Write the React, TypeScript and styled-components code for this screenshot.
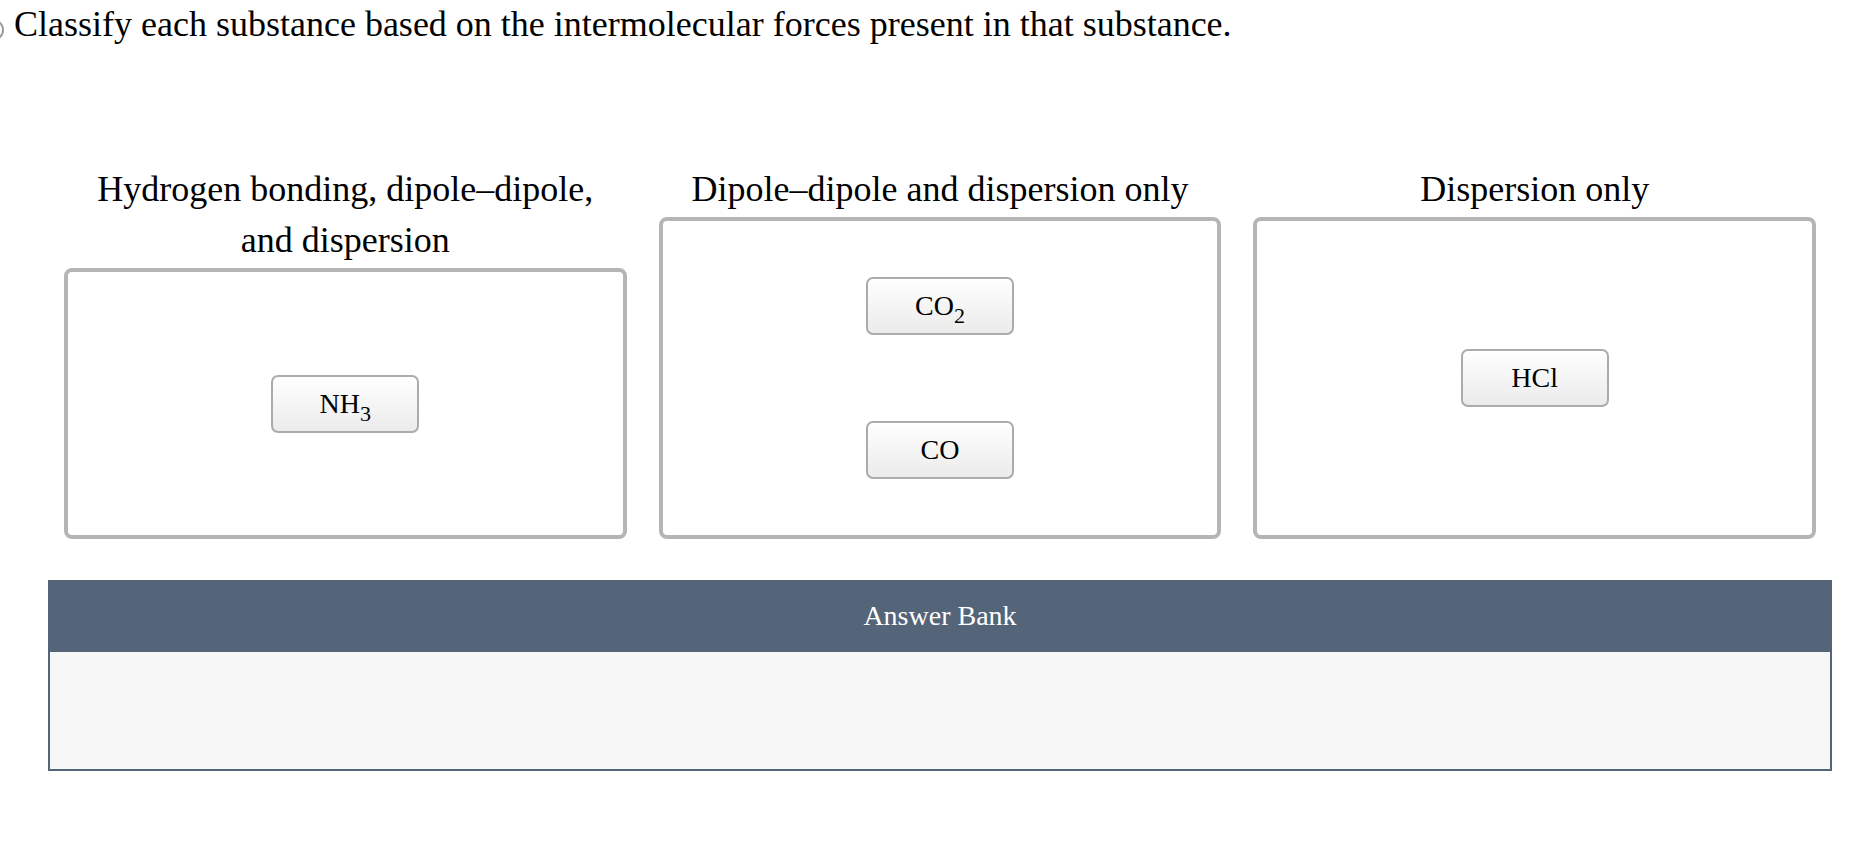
import React from "react";
import styled, { createGlobalStyle } from "styled-components";

const Global = createGlobalStyle`
  html, body { margin: 0; padding: 0; background: #ffffff; }
  body { font-family: "Liberation Serif", "Times New Roman", serif; color: #000; }
`;

const Page = styled.div`
  width: 1868px;
  min-height: 844px;
  display: flex;
  flex-direction: column;
`;

const HeadingRow = styled.div`
  display: flex;
  align-items: center;
  padding: 4px 0 0 0;
`;

const Badge = styled.span`
  width: 22px;
  height: 22px;
  box-sizing: border-box;
  border: 2px solid #9a9a9a;
  border-radius: 50%;
  margin-left: -18px;
  margin-right: 10px;
  margin-top: 12px;
  flex: none;
`;

const Heading = styled.h1`
  margin: 0;
  font-weight: normal;
  font-size: 36px;
  line-height: 40px;
`;

const Columns = styled.div`
  margin: 119px 0 0 64px;
  width: 1752px;
  display: grid;
  grid-template-columns: repeat(3, 1fr);
  column-gap: 32px;
`;

const Column = styled.div`
  display: flex;
  flex-direction: column;
`;

const Title = styled.div`
  font-size: 36px;
  line-height: 51px;
  text-align: center;
  padding-top: 1px;
  margin-bottom: 2px;
`;

const DropZone = styled.div`
  flex: 1;
  min-height: 271px;
  box-sizing: border-box;
  border: 4px solid #b5b5b5;
  border-radius: 8px;
  display: flex;
  flex-direction: column;
  align-items: center;
  justify-content: center;
  gap: 86px;
`;

const Chip = styled.div`
  width: 148px;
  height: 58px;
  box-sizing: border-box;
  border: 2px solid #ababab;
  border-radius: 7px;
  background: linear-gradient(#ffffff, #ebebeb);
  display: flex;
  align-items: center;
  justify-content: center;
  font-size: 28px;
  line-height: 1;
`;

const Formula = styled.span`
  display: inline-block;
  line-height: 1;
`;

const Sub = styled.sub`
  font-size: 22px;
  line-height: 0;
  vertical-align: -8px;
`;

const Bank = styled.section`
  margin: 41px 0 0 48px;
  width: 1784px;
  display: flex;
  flex-direction: column;
`;

const BankHeader = styled.div`
  height: 72px;
  background: #546479;
  color: #ffffff;
  font-size: 28px;
  display: flex;
  align-items: center;
  justify-content: center;
`;

const BankBody = styled.div`
  height: 119px;
  box-sizing: border-box;
  background: #f7f7f7;
  border: 2px solid #546479;
  border-top: none;
`;

type Item = { base: string; sub?: string };

const columns: { title: React.ReactNode; items: Item[] }[] = [
  {
    title: (
      <>
        Hydrogen bonding, dipole–dipole,
        <br />
        and dispersion
      </>
    ),
    items: [{ base: "NH", sub: "3" }],
  },
  {
    title: "Dipole–dipole and dispersion only",
    items: [{ base: "CO", sub: "2" }, { base: "CO" }],
  },
  { title: "Dispersion only", items: [{ base: "HCl" }] },
];

export default function App() {
  return (
    <Page>
      <Global />
      <HeadingRow>
        <Badge />
        <Heading>
          Classify each substance based on the intermolecular forces present in that substance.
        </Heading>
      </HeadingRow>
      <Columns>
        {columns.map((c, i) => (
          <Column key={i}>
            <Title>{c.title}</Title>
            <DropZone>
              {c.items.map((it, j) => (
                <Chip key={j}>
                  <Formula>
                    {it.base}
                    {it.sub && <Sub>{it.sub}</Sub>}
                  </Formula>
                </Chip>
              ))}
            </DropZone>
          </Column>
        ))}
      </Columns>
      <Bank>
        <BankHeader>Answer Bank</BankHeader>
        <BankBody />
      </Bank>
    </Page>
  );
}
